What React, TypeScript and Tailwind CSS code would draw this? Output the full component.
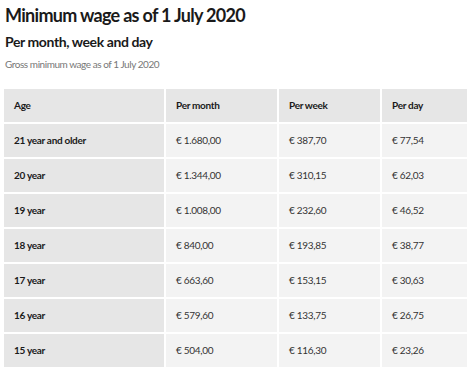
const ROWS = [
  ["21 year and older", "€ 1.680,00", "€ 387,70", "€ 77,54"],
  ["20 year", "€ 1.344,00", "€ 310,15", "€ 62,03"],
  ["19 year", "€ 1.008,00", "€ 232,60", "€ 46,52"],
  ["18 year", "€ 840,00", "€ 193,85", "€ 38,77"],
  ["17 year", "€ 663,60", "€ 153,15", "€ 30,63"],
  ["16 year", "€ 579,60", "€ 133,75", "€ 26,75"],
  ["15 year", "€ 504,00", "€ 116,30", "€ 23,26"],
];

const HEADERS = ["Age", "Per month", "Per week", "Per day"];

export default function App() {
  return (
    <div
      className="w-[474px] h-[373px] bg-white text-[#1a1a1a] overflow-hidden"
      style={{ fontFamily: 'Lato, "Noto Sans", sans-serif' }}
    >
      <h1 className="pl-[5px] pt-[2px] text-[18px] leading-[26px] font-bold tracking-[-0.7px]">
        Minimum wage as of 1 July 2020
      </h1>
      <h2 className="pl-[5px] mt-[3px] text-[14px] leading-[22px] font-bold tracking-[-0.4px]">
        Per month, week and day
      </h2>
      <p className="pl-[5px] mt-[4px] text-[10px] leading-[14px] text-[#777] tracking-[-0.45px]">
        Gross minimum wage as of 1 July 2020
      </p>

      {/* wage table */}
      <div className="mt-[18px] ml-[4px] grid grid-cols-[160px_111px_101px_85px] gap-[2px] text-[10px] tracking-[-0.3px]">
        {HEADERS.map((h) => (
          <div key={h} className="h-[33px] flex items-center pl-[10px] bg-[#e6e6e6] font-bold">
            {h}
          </div>
        ))}
        {ROWS.map((row) =>
          row.map((cell, i) => (
            <div
              key={row[0] + i}
              className={
                i === 0
                  ? "h-[33px] flex items-center pl-[10px] bg-[#e6e6e6] font-bold"
                  : "h-[33px] flex items-center pl-[10px] bg-[#f3f3f3] text-[#333]"
              }
            >
              {cell}
            </div>
          ))
        )}
      </div>
    </div>
  );
}
